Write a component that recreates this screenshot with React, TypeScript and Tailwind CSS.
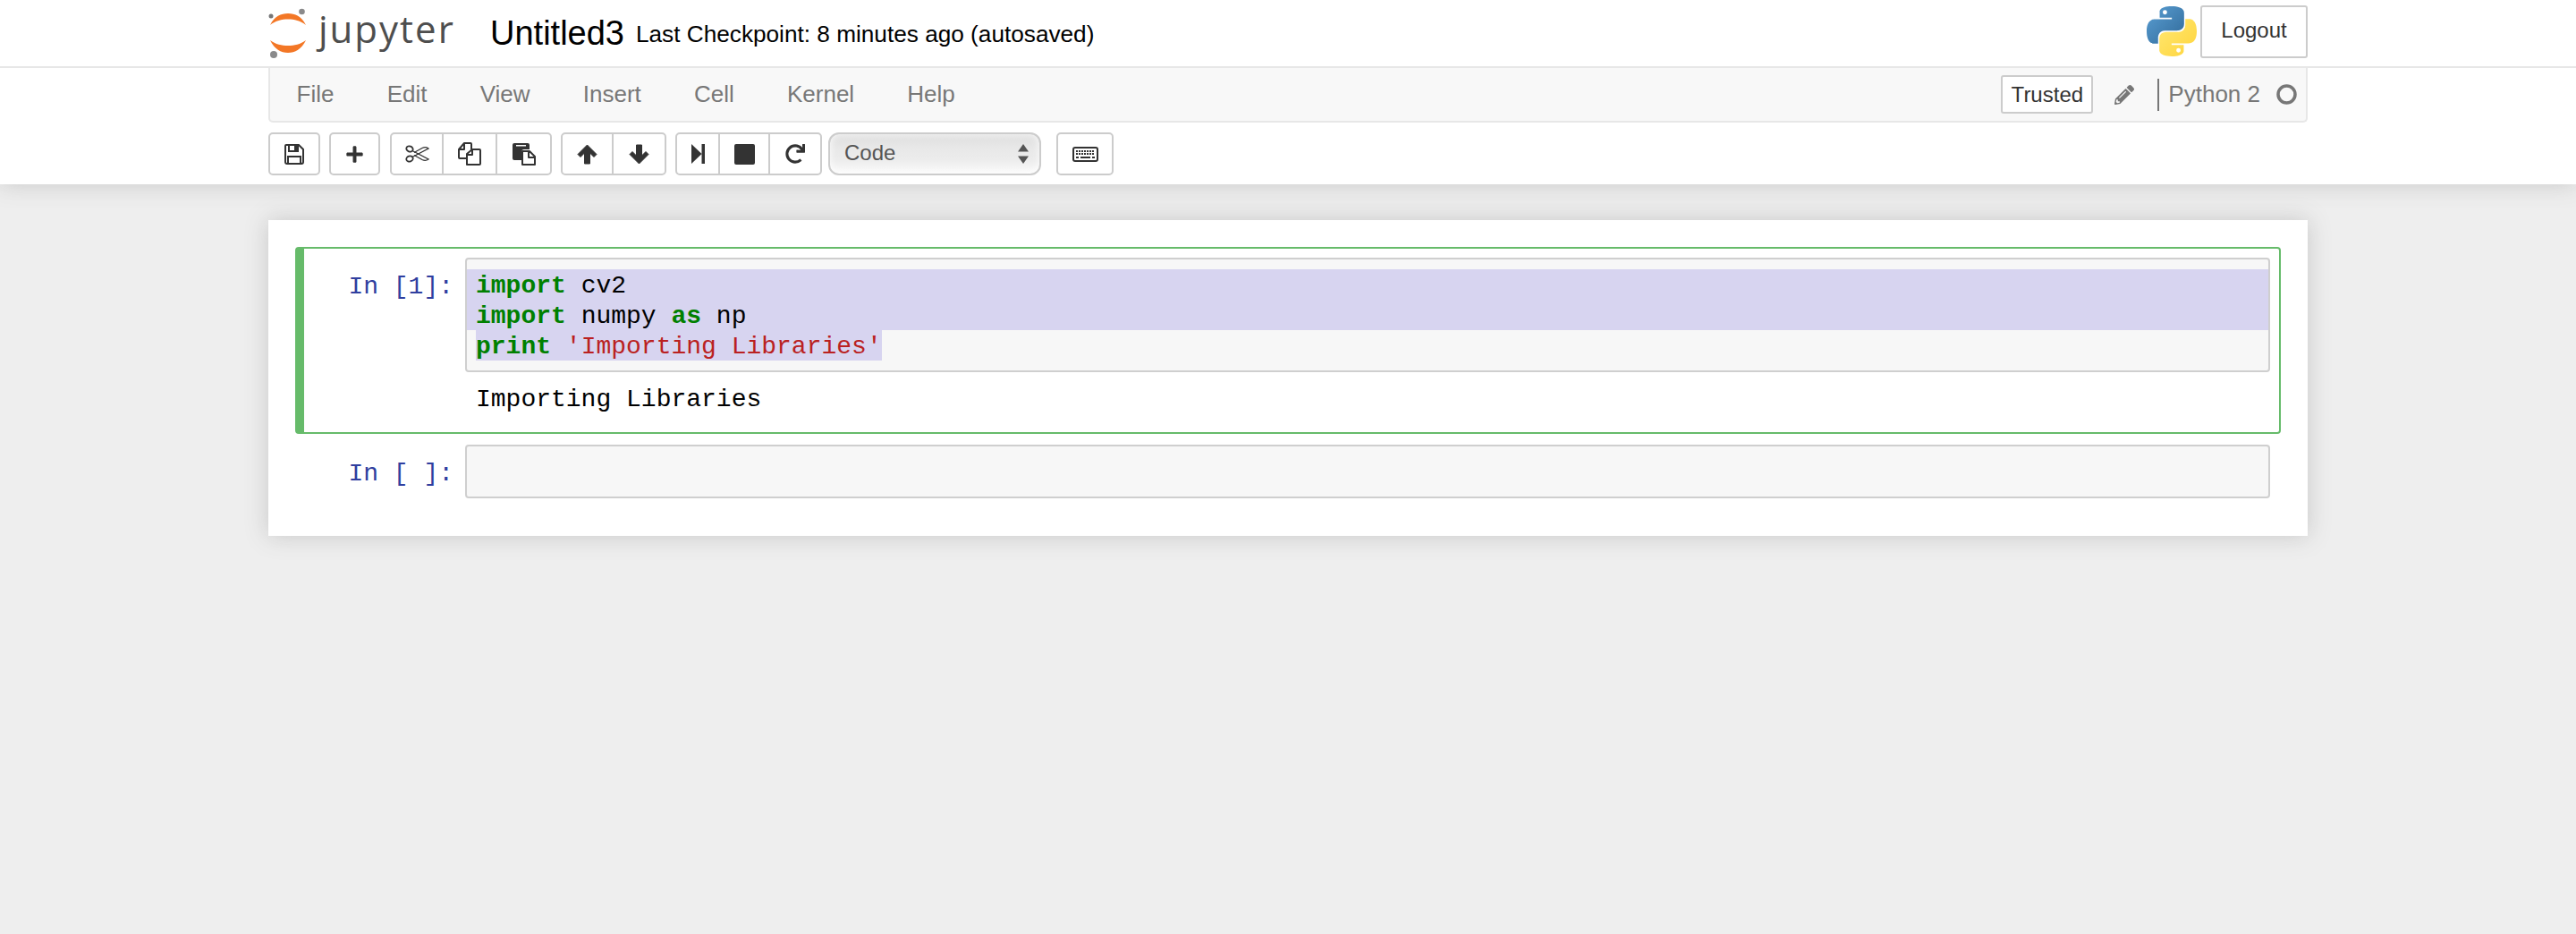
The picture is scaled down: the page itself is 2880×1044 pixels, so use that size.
import { FaPencilAlt, FaPlus, FaRedo } from 'react-icons/fa';

const sans = 'font-["Liberation_Sans",Arial,sans-serif]';

function JupyterLogo() {
  return (
    <div className="flex w-[248px] items-center">
      <svg width="46" height="60" viewBox="0 0 46 60" className="ml-[-2px] mt-[2px] shrink-0">
        <path d="M4 20C9 10 16 7 24 7s15 3 20 13C38 15 31 13.500 24 13.500S10 15 4 20z" fill="#f37726" />
        <path d="M4 37c6 4.500 13 6 20 6s14-1.500 20-6C39 47 32 51 24 51S9 47 4 37z" fill="#f37726" />
        <circle cx="5" cy="10" r="2.500" fill="#767677" />
        <circle cx="39.500" cy="5" r="3.300" fill="#8a8a8b" />
        <circle cx="8" cy="53" r="4" fill="#8a8a8b" />
      </svg>
      <span className='ml-[12px] mt-[-10px] font-["Open_Sans",sans-serif] text-[42px] font-medium leading-none tracking-[2px] text-[#4e4e4e]'>
        jupyter
      </span>
    </div>
  );
}

function PythonLogo() {
  const d =
    'M54.900 0C26.900 0 28.600 12.200 28.600 12.200l0 12.600h26.700v3.800H18C18 28.600 0 26.500 0 54.800s15.700 27.300 15.700 27.300h9.400V69s-.5-15.700 15.500-15.700h26.600s15 .2 15-14.500V14.500S84.500 0 54.900 0zM40.100 8.500a4.800 4.800 0 1 1 0 9.600 4.800 4.800 0 0 1 0-9.600z';
  return (
    <svg width="56" height="56" viewBox="0 0 110 110">
      <defs>
        <linearGradient id="pyBlue" x1="0" y1="0" x2="1" y2="1">
          <stop offset="0" stopColor="#5a9fd4" />
          <stop offset="1" stopColor="#306998" />
        </linearGradient>
        <linearGradient id="pyYellow" x1="0" y1="0" x2="1" y2="1">
          <stop offset="0" stopColor="#ffd43b" />
          <stop offset="1" stopColor="#ffe873" />
        </linearGradient>
      </defs>
      <path d={d} fill="url(#pyBlue)" />
      <path d={d} fill="url(#pyYellow)" transform="rotate(180 55 55)" />
    </svg>
  );
}

function SaveIcon() {
  return (
    <svg width="22" height="23" viewBox="0 0 22 23" fill="none" stroke="#333" strokeWidth="2">
      <path d="M2 1h14l5 5v14a2 2 0 0 1-2 2H3a2 2 0 0 1-2-2V2a1 1 0 0 1 1-1z" />
      <path d="M5 1v7h10V1" />
      <path d="M4 22v-8h14v8" />
      <rect x="11" y="2" width="3" height="5" fill="#333" stroke="none" />
    </svg>
  );
}

function ScissorsIcon() {
  return (
    <svg width="27" height="20" viewBox="0 0 27 20" fill="none" stroke="#333" strokeWidth="1.800">
      <ellipse cx="5" cy="4.500" rx="3.800" ry="3" transform="rotate(20 5 4.500)" />
      <ellipse cx="5" cy="15.500" rx="3.800" ry="3" transform="rotate(-20 5 15.500)" />
      <path d="M8 6.500L26 16c-2 1.500-5 1.500-7 .5L10 11.500" strokeWidth="1.300" />
      <path d="M8 13.500L26 4c-2-1.500-5-1.500-7-.5L10 8.500" strokeWidth="1.300" />
    </svg>
  );
}

function CopyIcon() {
  return (
    <svg width="26" height="26" viewBox="0 0 26 26" fill="none" stroke="#333" strokeWidth="2" strokeLinejoin="round">
      <path d="M10 18H2a1 1 0 0 1-1-1V8l6-7h7a1 1 0 0 1 1 1v6" />
      <path d="M7 1v7H1" />
      <path d="M10 25V13l6-5h8a1 1 0 0 1 1 1v15a1 1 0 0 1-1 1z" />
      <path d="M16 8v6h-6" />
    </svg>
  );
}

function PasteIcon() {
  return (
    <svg width="26" height="26" viewBox="0 0 26 26">
      <path d="M2 1h15a2 2 0 0 1 2 2v5h-6a3 3 0 0 0-3 3v9H2a2 2 0 0 1-2-2V3a2 2 0 0 1 2-2z" fill="#333" />
      <rect x="4" y="3" width="11" height="1.500" fill="#fff" />
      <path d="M11 25V10h8l6 6v9z M18 10v7h7" fill="none" stroke="#333" strokeWidth="2" strokeLinejoin="round" />
    </svg>
  );
}

function KeyboardIcon() {
  return (
    <svg width="29" height="17" viewBox="0 0 29 17" fill="none">
      <rect x="1" y="1" width="27" height="15" rx="2" stroke="#333" strokeWidth="2" />
      <path d="M4 5h21M4 8h21" stroke="#333" strokeWidth="2" strokeDasharray="2 1" />
      <path d="M4 12h3M9 12h11M22 12h3" stroke="#333" strokeWidth="2" />
    </svg>
  );
}

function ArrowUpIcon() {
  return (
    <svg width="23" height="23" viewBox="0 0 23 23" fill="#333" stroke="#333" strokeWidth="1" strokeLinejoin="round">
      <path d="M11.500 1L22 11.500 19 14.500 14.500 10V22h-6V10L4 14.500 1 11.500z" />
    </svg>
  );
}

function ArrowDownIcon() {
  return (
    <svg width="23" height="23" viewBox="0 0 23 23" fill="#333" stroke="#333" strokeWidth="1" strokeLinejoin="round">
      <path d="M11.500 22L22 11.500 19 8.500 14.500 13V1h-6v12L4 8.500 1 11.500z" />
    </svg>
  );
}

function StepIcon() {
  return (
    <svg width="15" height="22" viewBox="0 0 15 22" fill="#333">
      <path d="M0 0l11.500 11L0 22zM11.500 0H15v22h-3.500z" />
    </svg>
  );
}

function Group({ className, children }: { className: string; children: React.ReactNode }) {
  return (
    <div className={`flex h-[48px] divide-x-2 divide-[#ccc] rounded-[5px] border-2 border-[#ccc] bg-white ${className}`}>
      {children}
    </div>
  );
}

function Btn({ className, children }: { className: string; children: React.ReactNode }) {
  return <div className={`flex h-full items-center justify-center text-[#333] ${className}`}>{children}</div>;
}

function Toolbar() {
  return (
    <div className="flex pt-[11px] pb-[10px]">
      <Group className="w-[58px]">
        <Btn className="w-full"><SaveIcon /></Btn>
      </Group>
      <Group className="ml-[10px] w-[57px]">
        <Btn className="w-full"><FaPlus size={21} /></Btn>
      </Group>
      <Group className="ml-[11px] w-[181px]">
        <Btn className="w-[58px]"><ScissorsIcon /></Btn>
        <Btn className="w-[60px]"><CopyIcon /></Btn>
        <Btn className="w-[59px]"><PasteIcon /></Btn>
      </Group>
      <Group className="ml-[10px] w-[118px]">
        <Btn className="w-[57px]"><ArrowUpIcon /></Btn>
        <Btn className="w-[57px]"><ArrowDownIcon /></Btn>
      </Group>
      <Group className="ml-[10px] w-[164px]">
        <Btn className="w-[48px]"><StepIcon /></Btn>
        <Btn className="w-[56px]"><div className="size-[23px] rounded-[2px] bg-[#333]" /></Btn>
        <Btn className="w-[56px]"><FaRedo size={22} /></Btn>
      </Group>
      <div className="relative ml-[7px] flex h-[48px] w-[238px] items-center rounded-[12px] border-2 border-[#ccc] bg-[linear-gradient(#dedede,#e8e8e8_35%,#ececec_65%,#fbfbfb)] pb-[2px] pl-[16px] text-[24px] text-[#555] shadow-[inset_0_0_8px_rgba(255,255,255,0.9)]">
        Code
        <svg width="12" height="22" viewBox="0 0 12 22" className="absolute right-[12px] top-[11px]" fill="#555">
          <path d="M6 0l6 8.500H0zM0 13.500h12L6 22z" />
        </svg>
      </div>
      <Group className="ml-[17px] w-[64px]">
        <Btn className="w-full"><KeyboardIcon /></Btn>
      </Group>
    </div>
  );
}

function Header() {
  return (
    <div className="relative h-[206px] bg-white shadow-[0_0_24px_rgba(87,87,87,0.25)]">
      <div className="flex h-[74px] justify-center">
        <div className="flex w-[2280px] items-center">
          <JupyterLogo />
          <span className="text-[38px] leading-none text-black">Untitled3</span>
          <span className="ml-[13px] mt-[3px] text-[26.2px] leading-none text-black">Last Checkpoint: 8 minutes ago (autosaved)</span>
          <div className="ml-auto mb-[4px] flex items-center">
            <PythonLogo />
            <div className="ml-[4px] flex h-[59px] w-[120px] items-center justify-center rounded-[3px] border-2 border-[#ccc] pb-[2px] text-[24px] text-[#333]">
              Logout
            </div>
          </div>
        </div>
      </div>
      <div className="border-t-2 border-[#e7e7e7]">
        <div className="mx-auto w-[2280px]">
          <div className="flex h-[61px] items-center rounded-b-[5px] border-x-2 border-b-2 border-[#e7e7e7] bg-[#f8f8f8] text-[26px] text-[#777]">
            <span className="px-[29.6px]">File</span>
            <span className="px-[29.6px]">Edit</span>
            <span className="px-[29.6px]">View</span>
            <span className="px-[29.6px]">Insert</span>
            <span className="px-[29.6px]">Cell</span>
            <span className="px-[29.6px]">Kernel</span>
            <span className="px-[29.6px]">Help</span>
            <div className="ml-auto flex items-center pr-[10px]">
              <div className="flex h-[43px] w-[103px] items-center justify-center rounded-[3px] border-2 border-[#ccc] bg-white text-[24px] text-[#333]">
                Trusted
              </div>
              <FaPencilAlt size={22} className="ml-[24px]" />
              <div className="ml-[26px] h-[36px] w-[2px] bg-[#777]" />
              <span className="ml-[10px]">Python 2</span>
              <svg width="23" height="23" viewBox="0 0 23 23" fill="none" stroke="#777" strokeWidth="3.500" className="ml-[18px]">
                <circle cx="11.500" cy="11.500" r="9.500" />
              </svg>
            </div>
          </div>
          <Toolbar />
        </div>
      </div>
    </div>
  );
}

function InputBox({ children }: { children?: React.ReactNode }) {
  return (
    <div className="min-h-[60px] w-full rounded-[4px] border-2 border-[#cfcfcf] bg-[#f7f7f7] py-[11px] text-[28px] leading-[38px]">
      {children}
    </div>
  );
}

function Prompt({ children }: { children: React.ReactNode }) {
  return (
    <div className="w-[170px] shrink-0 whitespace-pre pt-[16px] pr-[13px] text-right text-[28px] leading-[34px] text-[#303f9f]">
      {children}
    </div>
  );
}

function Kw({ children }: { children: React.ReactNode }) {
  return <span className="font-bold text-[#008000]">{children}</span>;
}

function Notebook() {
  return (
    <div className='mx-auto mt-[40px] w-[2280px] bg-white p-[30px] font-["Liberation_Mono","Courier_New",monospace] shadow-[0_0_24px_rgba(87,87,87,0.25)]'>
      <div className="flex rounded-[4px] border-2 border-l-[10px] border-[#66bb6a] p-[10px]">
        <Prompt>In [1]:</Prompt>
        <div className="min-w-0 flex-1">
          <InputBox>
            <div className="h-[34px] whitespace-pre bg-[#d7d4f0] px-[10px] text-black"><Kw>import</Kw> cv2</div>
            <div className="h-[34px] whitespace-pre bg-[#d7d4f0] px-[10px] text-black"><Kw>import</Kw> numpy <Kw>as</Kw> np</div>
            <div className="ml-[10px] h-[34px] w-[454px] whitespace-pre bg-[#d7d4f0] text-black"><Kw>print</Kw> <span className="text-[#ba2121]">'Importing Libraries'</span></div>
          </InputBox>
          <div className="pl-[12px] pt-[14px] pb-[9px] text-[28px] leading-[34px] text-black">Importing Libraries</div>
        </div>
      </div>
      <div className="flex rounded-[4px] border-2 border-l-[10px] border-transparent p-[10px]">
        <Prompt>In [ ]:</Prompt>
        <div className="min-w-0 flex-1">
          <InputBox />
        </div>
      </div>
    </div>
  );
}

export default function App() {
  return (
    <div className={`min-h-[1044px] overflow-hidden bg-[#eeeeee] ${sans}`}>
      <Header />
      <Notebook />
    </div>
  );
}
